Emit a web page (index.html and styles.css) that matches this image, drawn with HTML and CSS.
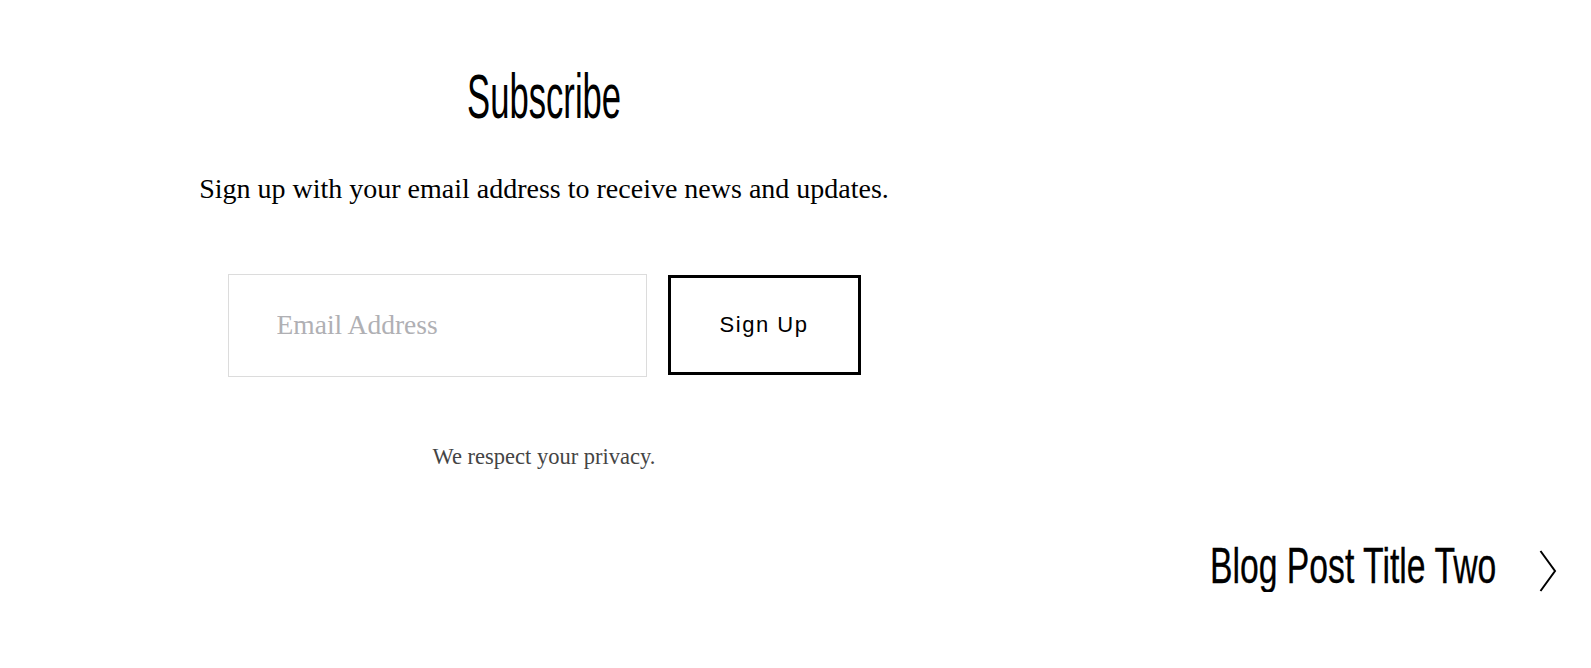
FILE: index.html
```html
<!DOCTYPE html>
<html lang="en">
<head>
    <meta charset="UTF-8">
    <meta name="viewport" content="width=device-width, initial-scale=1.0">
    <title>Subscribe</title>
    <link rel="stylesheet" href="styles.css">
</head>
<body>
    <main class="page">
        <section class="newsletter">
            <h2 class="newsletter-title"><span>Subscribe</span></h2>
            <p class="newsletter-lede">Sign up with your email address to receive news and updates.</p>
            <form class="newsletter-form" onsubmit="return false">
                <input type="email" class="newsletter-input" placeholder="Email Address">
                <button type="submit" class="newsletter-button">Sign Up</button>
            </form>
            <p class="newsletter-note">We respect your privacy.</p>
        </section>

        <nav class="pager">
            <a href="#" class="pager-next">
                <span class="pager-title">Blog Post Title Two</span>
                <svg class="pager-arrow" width="18" height="42" viewBox="0 0 18 42">
                    <polyline points="1.5,1 16,21 1.5,41" fill="none" stroke="#000" stroke-width="2"/>
                </svg>
            </a>
        </nav>
    </main>
</body>
</html>
```

FILE: styles.css
```css
body, html {
    margin: 0;
    padding: 0;
    background-color: #fff;
    color: #000;
    font-family: 'Liberation Serif', serif;
}

.page {
    display: flex;
    flex-direction: column;
}

.newsletter {
    width: 1088px;
    padding-top: 65px;
    display: flex;
    flex-direction: column;
    align-items: center;
    text-align: center;
}
.newsletter-title {
    margin: 0;
    font-family: 'Liberation Sans', sans-serif;
    font-size: 63px;
    font-weight: normal;
    line-height: 1;
}
/* narrow display face */
.newsletter-title span {
    display: inline-block;
    transform: scaleX(0.55);
}
.newsletter-lede {
    margin: 44px 0 0;
    font-size: 28px;
    line-height: 1.2;
}
.newsletter-form {
    margin-top: 68px;
    display: flex;
    align-items: center;
    gap: 21px;
}
.newsletter-input {
    box-sizing: border-box;
    width: 419px;
    height: 103px;
    padding: 0 20px 0 48px;
    border: 1px solid #dcdcdc;
    font-family: 'Liberation Serif', serif;
    font-size: 27.5px;
    color: #000;
    outline: none;
}
.newsletter-input::placeholder {
    color: #b0b0b4;
}
.newsletter-button {
    box-sizing: border-box;
    width: 193px;
    height: 100px;
    border: 3px solid #000;
    background: #fff;
    font-family: 'Liberation Sans', sans-serif;
    font-size: 22px;
    letter-spacing: 1.5px;
    color: #000;
    cursor: pointer;
}
.newsletter-note {
    margin: 66px 0 0;
    font-size: 22.5px;
    line-height: 1.2;
    color: #444;
}

.pager {
    display: flex;
    justify-content: flex-end;
    padding: 70px 34px 0 0;
}
.pager-next {
    display: flex;
    align-items: center;
    gap: 43px;
    text-decoration: none;
    color: #000;
}
.pager-title {
    display: inline-block;
    font-family: 'Liberation Sans', sans-serif;
    font-size: 50px;
    line-height: 1;
    transform: scaleX(0.675);
    transform-origin: right center;
    margin-left: -150px;
    -webkit-text-stroke: 0.3px #000;
}
.pager-arrow {
    margin-top: 10px;
}
```
